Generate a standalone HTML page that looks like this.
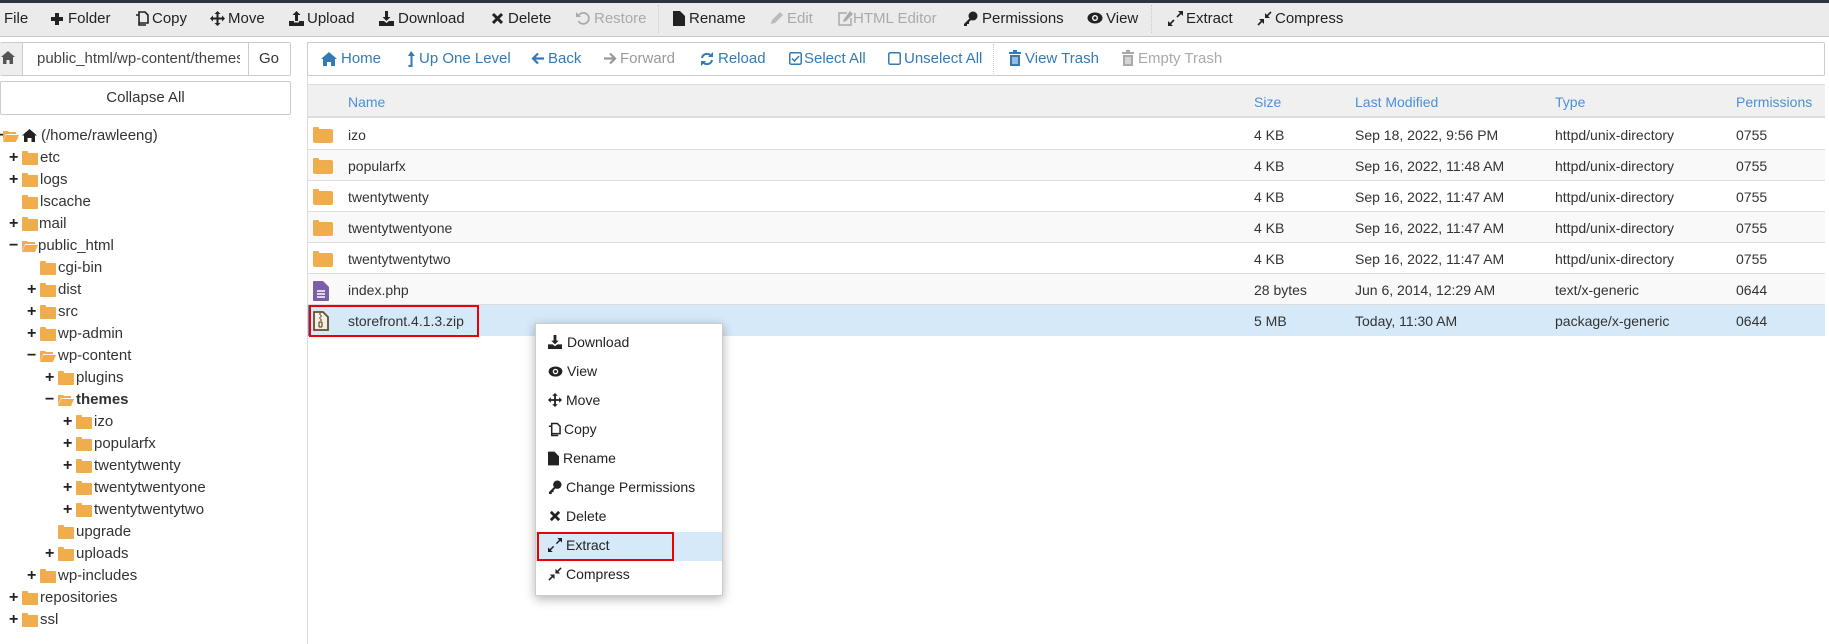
<!DOCTYPE html>
<html><head><meta charset="utf-8">
<style>
*{box-sizing:border-box;margin:0;padding:0}
body{width:1829px;height:636px;overflow:hidden;background:#fff;font-family:"Liberation Sans",Arial,sans-serif;color:#333;position:relative}
.a{position:absolute;white-space:nowrap}
.tb{position:absolute;left:0;top:0;width:1829px;height:37px;background:#ebebeb;border-top:3px solid #2b3440;border-bottom:1px solid #c8c8c8}
.t{position:absolute;top:10px;font-size:15px;line-height:18px;color:#222}
.g{color:#aaa}
.ic{position:absolute;display:inline-block}
svg{display:block}
.nav{position:absolute;left:307px;top:42px;width:1518px;height:34px;border:1px solid #ccc;border-radius:2px;background:#fff}
.n{position:absolute;top:50px;font-size:15px;line-height:18px;color:#337ab7}
.hdr{position:absolute;left:307px;top:84px;width:1518px;height:34px;background:#f0f0f0;border-top:1px solid #ddd;border-bottom:2px solid #ddd}
.h{position:absolute;top:93px;font-size:14px;line-height:18px;color:#4a90d9}
.row{position:absolute;left:308px;width:1517px;height:31px;border-bottom:1px solid #ddd}
.c{position:absolute;font-size:14px;line-height:18px;color:#333}
.tr{position:absolute;font-size:15px;line-height:18px;color:#333}
.fo{position:absolute;width:16px;height:12px;background:#f0ad4e;border-radius:1px}
.fo:before{content:"";position:absolute;left:0;top:-2px;width:6px;height:3px;background:#f0ad4e;border-radius:1px 1px 0 0}
.pl{position:absolute;font-size:16px;font-weight:bold;line-height:16px;color:#222}
.m{position:absolute;left:540px;font-size:14px;line-height:18px;color:#222}
</style></head><body>

<div class="tb"></div>
<div class="t" style="left:4px">File</div>
<svg class="ic" style="left:50px;top:12px" width="14" height="14" viewBox="0 0 14 14"><path d="M5 1h4v4h4v4h-4v4h-4v-4h-4v-4h4z" fill="#222"/></svg>
<div class="t" style="left:68px">Folder</div>
<svg class="ic" style="left:135px;top:11px" width="14" height="15" viewBox="0 0 14 15"><path d="M4 1h6l3 3v8h-9z M1 4h3v10h7" fill="none" stroke="#222" stroke-width="1.6"/></svg>
<div class="t" style="left:152px">Copy</div>
<svg class="ic" style="left:210px;top:11px" width="15" height="15" viewBox="0 0 15 15"><path d="M7.5 0l3 3h-2v3.5h3.5v-2l3 3-3 3v-2h-3.5v3.5h2l-3 3-3-3h2v-3.5h-3.5v2l-3-3 3-3v2h3.5v-3.5h-2z" fill="#222"/></svg>
<div class="t" style="left:228px">Move</div>
<svg class="ic" style="left:289px;top:11px" width="15" height="15" viewBox="0 0 15 15"><path d="M7.5 0l4 4h-2.5v6h-3v-6h-2.5z M0 10h5v1.5h5v-1.5h5v5h-15z" fill="#222"/></svg>
<div class="t" style="left:307px">Upload</div>
<svg class="ic" style="left:379px;top:11px" width="15" height="15" viewBox="0 0 15 15"><path d="M6 0h3v6h2.5l-4 4-4-4h2.5z M0 10h5l2.5 2 2.5-2h5v5h-15z" fill="#222"/></svg>
<div class="t" style="left:398px">Download</div>
<svg class="ic" style="left:491px;top:12px" width="13" height="13" viewBox="0 0 13 13"><path d="M2 2l9 9M11 2l-9 9" stroke="#222" stroke-width="3"/></svg>
<div class="t" style="left:508px">Delete</div>
<svg class="ic" style="left:576px;top:11px" width="14" height="15" viewBox="0 0 14 15"><path d="M3 4a5.5 5.5 0 1 1 -0.5 6" fill="none" stroke="#aaa" stroke-width="1.8"/><path d="M0 1v5h5z" fill="#aaa"/></svg>
<div class="t g" style="left:594px">Restore</div>
<div class="a" style="left:658px;top:5px;width:1px;height:28px;border-left:1px dotted #ccc"></div>
<svg class="ic" style="left:673px;top:11px" width="12" height="15" viewBox="0 0 12 15"><path d="M0 0h7l5 5v10h-12z" fill="#222"/></svg>
<div class="t" style="left:689px">Rename</div>
<svg class="ic" style="left:769px;top:11px" width="15" height="15" viewBox="0 0 15 15"><path d="M11 1l3 3-8 8-4 1 1-4z" fill="#bbb"/></svg>
<div class="t g" style="left:787px">Edit</div>
<svg class="ic" style="left:838px;top:11px" width="15" height="15" viewBox="0 0 15 15"><path d="M9 2h-8v12h12v-7" fill="none" stroke="#aaa" stroke-width="1.5"/><path d="M12 0l3 3-7 7-3 1 1-3z" fill="#aaa"/></svg>
<div class="t g" style="left:853px">HTML Editor</div>
<svg class="ic" style="left:963px;top:11px" width="15" height="15" viewBox="0 0 15 15"><circle cx="10" cy="5" r="4.5" fill="#222"/><path d="M7 7l-6 6v2h3v-2h2v-2l3-3z" fill="#222"/></svg>
<div class="t" style="left:982px">Permissions</div>
<svg class="ic" style="left:1087px;top:12px" width="16" height="12" viewBox="0 0 16 12"><ellipse cx="8" cy="6" rx="7.5" ry="5.5" fill="#222"/><circle cx="8" cy="6" r="3" fill="#fff"/><circle cx="8" cy="6" r="1.6" fill="#222"/></svg>
<div class="t" style="left:1106px">View</div>
<div class="a" style="left:1151px;top:5px;width:1px;height:28px;border-left:1px dotted #ccc"></div>
<svg class="ic" style="left:1168px;top:11px" width="15" height="15" viewBox="0 0 15 15"><path d="M2 13l4-4M13 2l-4 4" stroke="#222" stroke-width="1.6"/><path d="M0 15v-5l5 5zM15 0v5l-5-5z" fill="#222"/></svg>
<div class="t" style="left:1186px">Extract</div>
<svg class="ic" style="left:1257px;top:11px" width="15" height="15" viewBox="0 0 15 15"><path d="M1 14l4-4M14 1l-4 4" stroke="#222" stroke-width="1.6"/><path d="M8 2v5h5zM7 13v-5h-5z" fill="#222"/></svg>
<div class="t" style="left:1275px">Compress</div>

<!-- path bar -->
<div class="a" style="left:0;top:42px;width:291px;height:34px;border:1px solid #ccc;border-radius:2px"></div>
<div class="a" style="left:0;top:43px;width:23px;height:32px;background:#eee;border-right:1px solid #ccc"></div>
<svg class="ic" style="left:1px;top:51px" width="14" height="13" viewBox="0 0 14 13"><path d="M7 0l7 6h-2v7h-3.5v-4h-3v4h-3.5v-7h-2z" fill="#555"/></svg>
<div class="a" style="left:37px;top:50px;font-size:15px;line-height:18px;color:#444;width:203px;overflow:hidden">public_html/wp-content/themes</div>
<div class="a" style="left:248px;top:43px;width:42px;height:32px;background:#fff;border-left:1px solid #ccc"></div>
<div class="a" style="left:259px;top:50px;font-size:15px;line-height:18px;color:#333">Go</div>
<div class="a" style="left:0;top:81px;width:291px;height:34px;border:1px solid #ccc;border-radius:2px;text-align:center;font-size:15px;line-height:32px;color:#333">Collapse All</div>

<!-- tree -->
<div class="a" style="left:307px;top:42px;width:0;height:600px;border-left:1px solid #ddd"></div>
<div class="pl" style="left:-5px;top:128px">−</div>
<svg class="ic" style="left:3px;top:130px" width="16" height="12" viewBox="0 0 16 12"><path d="M0 1h5l1 1h7v2h-10l-3 7z M3 5h13l-3 7h-13z" fill="#f0ad4e"/></svg>
<svg class="ic" style="left:22px;top:129px" width="15" height="13" viewBox="0 0 15 13"><path d="M7.5 0l7.5 6.5h-2v6.5h-3.5v-4h-4v4h-3.5v-6.5h-2z" fill="#222"/></svg>
<div class="tr" style="left:41px;top:127px">(/home/rawleeng)</div>

<div class="pl" style="left:9px;top:150px">+</div><div class="fo" style="left:22px;top:153px"></div><div class="tr" style="left:40px;top:149px">etc</div>
<div class="pl" style="left:9px;top:172px">+</div><div class="fo" style="left:22px;top:175px"></div><div class="tr" style="left:40px;top:171px">logs</div>
<div class="fo" style="left:22px;top:197px"></div><div class="tr" style="left:40px;top:193px">lscache</div>
<div class="pl" style="left:9px;top:216px">+</div><div class="fo" style="left:22px;top:219px"></div><div class="tr" style="left:39px;top:215px">mail</div>
<div class="pl" style="left:9px;top:238px">−</div><svg class="ic" style="left:22px;top:241px" width="16" height="12" viewBox="0 0 16 12"><path d="M0 0h5l1 1h7v2h-10l-3 7z M3 4h13l-3 7h-13z" fill="#f0ad4e"/></svg><div class="tr" style="left:38px;top:237px">public_html</div>
<div class="fo" style="left:40px;top:263px"></div><div class="tr" style="left:58px;top:259px">cgi-bin</div>
<div class="pl" style="left:27px;top:282px">+</div><div class="fo" style="left:40px;top:285px"></div><div class="tr" style="left:58px;top:281px">dist</div>
<div class="pl" style="left:27px;top:304px">+</div><div class="fo" style="left:40px;top:307px"></div><div class="tr" style="left:58px;top:303px">src</div>
<div class="pl" style="left:27px;top:326px">+</div><div class="fo" style="left:40px;top:329px"></div><div class="tr" style="left:58px;top:325px">wp-admin</div>
<div class="pl" style="left:27px;top:348px">−</div><svg class="ic" style="left:40px;top:351px" width="16" height="12" viewBox="0 0 16 12"><path d="M0 0h5l1 1h7v2h-10l-3 7z M3 4h13l-3 7h-13z" fill="#f0ad4e"/></svg><div class="tr" style="left:58px;top:347px">wp-content</div>
<div class="pl" style="left:45px;top:370px">+</div><div class="fo" style="left:58px;top:373px"></div><div class="tr" style="left:76px;top:369px">plugins</div>
<div class="pl" style="left:45px;top:392px">−</div><svg class="ic" style="left:58px;top:395px" width="16" height="12" viewBox="0 0 16 12"><path d="M0 0h5l1 1h7v2h-10l-3 7z M3 4h13l-3 7h-13z" fill="#f0ad4e"/></svg><div class="tr" style="left:76px;top:391px;font-weight:bold">themes</div>
<div class="pl" style="left:63px;top:414px">+</div><div class="fo" style="left:76px;top:417px"></div><div class="tr" style="left:94px;top:413px">izo</div>
<div class="pl" style="left:63px;top:436px">+</div><div class="fo" style="left:76px;top:439px"></div><div class="tr" style="left:94px;top:435px">popularfx</div>
<div class="pl" style="left:63px;top:458px">+</div><div class="fo" style="left:76px;top:461px"></div><div class="tr" style="left:94px;top:457px">twentytwenty</div>
<div class="pl" style="left:63px;top:480px">+</div><div class="fo" style="left:76px;top:483px"></div><div class="tr" style="left:94px;top:479px">twentytwentyone</div>
<div class="pl" style="left:63px;top:502px">+</div><div class="fo" style="left:76px;top:505px"></div><div class="tr" style="left:94px;top:501px">twentytwentytwo</div>
<div class="fo" style="left:58px;top:527px"></div><div class="tr" style="left:76px;top:523px">upgrade</div>
<div class="pl" style="left:45px;top:546px">+</div><div class="fo" style="left:58px;top:549px"></div><div class="tr" style="left:76px;top:545px">uploads</div>
<div class="pl" style="left:27px;top:568px">+</div><div class="fo" style="left:40px;top:571px"></div><div class="tr" style="left:58px;top:567px">wp-includes</div>
<div class="pl" style="left:9px;top:590px">+</div><div class="fo" style="left:22px;top:593px"></div><div class="tr" style="left:40px;top:589px">repositories</div>
<div class="pl" style="left:9px;top:612px">+</div><div class="fo" style="left:22px;top:615px"></div><div class="tr" style="left:40px;top:611px">ssl</div>

<!-- nav -->
<div class="nav"></div>
<svg class="ic" style="left:321px;top:52px" width="16" height="14" viewBox="0 0 16 14"><path d="M8 0l8 7h-2v7h-4v-4h-4v4h-4v-7h-2z" fill="#337ab7"/></svg>
<div class="n" style="left:341px">Home</div>
<svg class="ic" style="left:406px;top:51px" width="10" height="16" viewBox="0 0 10 16"><path d="M5 0l4 5h-2.5v11h-4v-2h2v-9h-2.5z" fill="#337ab7"/></svg>
<div class="n" style="left:419px">Up One Level</div>
<svg class="ic" style="left:531px;top:52px" width="14" height="13" viewBox="0 0 14 13"><path d="M13 6.5h-10M7 1.5l-5 5 5 5" fill="none" stroke="#337ab7" stroke-width="2.2"/></svg>
<div class="n" style="left:548px">Back</div>
<svg class="ic" style="left:603px;top:52px" width="14" height="13" viewBox="0 0 14 13"><path d="M1 6.5h10M7 1.5l5 5-5 5" fill="none" stroke="#999" stroke-width="2.2"/></svg>
<div class="n" style="left:620px;color:#999">Forward</div>
<svg class="ic" style="left:700px;top:52px" width="14" height="14" viewBox="0 0 14 14"><path d="M2 6a5 5 0 0 1 9-2M12 8a5 5 0 0 1-9 2" fill="none" stroke="#337ab7" stroke-width="2"/><path d="M13 0v5h-5zM1 14v-5h5z" fill="#337ab7"/></svg>
<div class="n" style="left:718px">Reload</div>
<svg class="ic" style="left:789px;top:52px" width="13" height="13" viewBox="0 0 13 13"><rect x="0.75" y="0.75" width="11.5" height="11.5" rx="1.5" fill="none" stroke="#337ab7" stroke-width="1.5"/><path d="M3 6.5l2.5 2.5 4.5-5" fill="none" stroke="#337ab7" stroke-width="1.5"/></svg>
<div class="n" style="left:804px">Select All</div>
<svg class="ic" style="left:888px;top:52px" width="13" height="13" viewBox="0 0 13 13"><rect x="0.75" y="0.75" width="11.5" height="11.5" rx="1.5" fill="none" stroke="#337ab7" stroke-width="1.5"/></svg>
<div class="n" style="left:904px">Unselect All</div>
<div class="a" style="left:993px;top:44px;height:30px;border-left:1px dotted #ccc"></div>
<svg class="ic" style="left:1009px;top:50px" width="12" height="16" viewBox="0 0 12 16"><path d="M0 2h12v2h-12zM4 0h4v2h-4zM1 5h10v11h-10z" fill="#337ab7"/><path d="M4 7v7M6 7v7M8 7v7" stroke="#fff" stroke-width="1"/></svg>
<div class="n" style="left:1025px">View Trash</div>
<svg class="ic" style="left:1122px;top:50px" width="12" height="16" viewBox="0 0 12 16"><path d="M0 2h12v2h-12zM4 0h4v2h-4zM1 5h10v11h-10z" fill="#aaa"/><path d="M4 7v7M6 7v7M8 7v7" stroke="#fff" stroke-width="1"/></svg>
<div class="n" style="left:1138px;color:#aaa">Empty Trash</div>

<!-- table -->
<div class="hdr"></div>
<div class="h" style="left:348px">Name</div>
<div class="h" style="left:1254px">Size</div>
<div class="h" style="left:1355px">Last Modified</div>
<div class="h" style="left:1555px">Type</div>
<div class="h" style="left:1736px">Permissions</div>
<div class="a" style="left:307px;top:84px;height:560px;border-left:1px solid #ddd"></div>

<div class="row" style="top:119px;background:#fff"></div>
<div class="row" style="top:150px;background:#f9f9f9"></div>
<div class="row" style="top:181px;background:#fff"></div>
<div class="row" style="top:212px;background:#f9f9f9"></div>
<div class="row" style="top:243px;background:#fff"></div>
<div class="row" style="top:274px;background:#f9f9f9"></div>
<div class="row" style="top:305px;background:#d6e9f8;border-left:2px solid #4a90d9;height:31px;border-bottom:none"></div>

<div class="fo" style="left:313px;top:129px;width:20px;height:14px;border-radius:2px"></div>
<div class="fo" style="left:313px;top:160px;width:20px;height:14px;border-radius:2px"></div>
<div class="fo" style="left:313px;top:191px;width:20px;height:14px;border-radius:2px"></div>
<div class="fo" style="left:313px;top:222px;width:20px;height:14px;border-radius:2px"></div>
<div class="fo" style="left:313px;top:253px;width:20px;height:14px;border-radius:2px"></div>
<svg class="ic" style="left:313px;top:281px" width="16" height="20" viewBox="0 0 16 20"><path d="M0 1a1 1 0 0 1 1-1h9l6 6v13a1 1 0 0 1-1 1h-14a1 1 0 0 1-1-1z" fill="#7b5ea7"/><path d="M4 10h8M4 13h8M4 16h8" stroke="#fff" stroke-width="1.4"/></svg>
<svg class="ic" style="left:313px;top:311px" width="16" height="20" viewBox="0 0 16 20"><path d="M1 1h9l5 5v13h-14z" fill="#f4efe6" stroke="#6b4a2e" stroke-width="1.8"/><path d="M7 2v2M8 4v2M7 6v2M8 8v2" stroke="#6b4a2e" stroke-width="1.2"/><rect x="6" y="11" width="3" height="5" rx="1" fill="none" stroke="#6b4a2e" stroke-width="1.2"/></svg>

<div class="c" style="left:348px;top:126px">izo</div>
<div class="c" style="left:348px;top:157px">popularfx</div>
<div class="c" style="left:348px;top:188px">twentytwenty</div>
<div class="c" style="left:348px;top:219px">twentytwentyone</div>
<div class="c" style="left:348px;top:250px">twentytwentytwo</div>
<div class="c" style="left:348px;top:281px">index.php</div>
<div class="c" style="left:348px;top:312px">storefront.4.1.3.zip</div>
<div class="a" style="left:309px;top:305px;width:170px;height:32px;border:2px solid #e00"></div>

<div class="c" style="left:1254px;top:126px">4 KB</div>
<div class="c" style="left:1254px;top:157px">4 KB</div>
<div class="c" style="left:1254px;top:188px">4 KB</div>
<div class="c" style="left:1254px;top:219px">4 KB</div>
<div class="c" style="left:1254px;top:250px">4 KB</div>
<div class="c" style="left:1254px;top:281px">28 bytes</div>
<div class="c" style="left:1254px;top:312px">5 MB</div>

<div class="c" style="left:1355px;top:126px">Sep 18, 2022, 9:56 PM</div>
<div class="c" style="left:1355px;top:157px">Sep 16, 2022, 11:48 AM</div>
<div class="c" style="left:1355px;top:188px">Sep 16, 2022, 11:47 AM</div>
<div class="c" style="left:1355px;top:219px">Sep 16, 2022, 11:47 AM</div>
<div class="c" style="left:1355px;top:250px">Sep 16, 2022, 11:47 AM</div>
<div class="c" style="left:1355px;top:281px">Jun 6, 2014, 12:29 AM</div>
<div class="c" style="left:1355px;top:312px">Today, 11:30 AM</div>

<div class="c" style="left:1555px;top:126px">httpd/unix-directory</div>
<div class="c" style="left:1555px;top:157px">httpd/unix-directory</div>
<div class="c" style="left:1555px;top:188px">httpd/unix-directory</div>
<div class="c" style="left:1555px;top:219px">httpd/unix-directory</div>
<div class="c" style="left:1555px;top:250px">httpd/unix-directory</div>
<div class="c" style="left:1555px;top:281px">text/x-generic</div>
<div class="c" style="left:1555px;top:312px">package/x-generic</div>

<div class="c" style="left:1736px;top:126px">0755</div>
<div class="c" style="left:1736px;top:157px">0755</div>
<div class="c" style="left:1736px;top:188px">0755</div>
<div class="c" style="left:1736px;top:219px">0755</div>
<div class="c" style="left:1736px;top:250px">0755</div>
<div class="c" style="left:1736px;top:281px">0644</div>
<div class="c" style="left:1736px;top:312px">0644</div>

<!-- context menu -->
<div class="a" style="left:535px;top:323px;width:188px;height:273px;background:#fff;border:1px solid #ccc;box-shadow:0 3px 10px rgba(0,0,0,0.3)"></div>
<div class="a" style="left:536px;top:532px;width:186px;height:29px;background:#d6e9f8"></div>
<div class="a" style="left:537px;top:532px;width:137px;height:29px;border:2px solid #e00"></div>
<svg class="ic" style="left:548px;top:335px" width="14" height="14" viewBox="0 0 15 15"><path d="M6 0h3v6h2.5l-4 4-4-4h2.5z M0 10h5l2.5 2 2.5-2h5v5h-15z" fill="#222"/></svg>
<div class="m" style="left:567px;top:333px">Download</div>
<svg class="ic" style="left:548px;top:366px" width="15" height="11" viewBox="0 0 16 12"><ellipse cx="8" cy="6" rx="7.5" ry="5.5" fill="#222"/><circle cx="8" cy="6" r="3" fill="#fff"/><circle cx="8" cy="6" r="1.6" fill="#222"/></svg>
<div class="m" style="left:567px;top:362px">View</div>
<svg class="ic" style="left:548px;top:393px" width="14" height="14" viewBox="0 0 15 15"><path d="M7.5 0l3 3h-2v3.5h3.5v-2l3 3-3 3v-2h-3.5v3.5h2l-3 3-3-3h2v-3.5h-3.5v2l-3-3 3-3v2h3.5v-3.5h-2z" fill="#222"/></svg>
<div class="m" style="left:566px;top:391px">Move</div>
<svg class="ic" style="left:548px;top:422px" width="13" height="15" viewBox="0 0 14 15"><path d="M4 1h6l3 3v8h-9z M1 4h3v10h7" fill="none" stroke="#222" stroke-width="1.6"/></svg>
<div class="m" style="left:564px;top:420px">Copy</div>
<svg class="ic" style="left:548px;top:451px" width="11" height="15" viewBox="0 0 12 15"><path d="M0 0h7l5 5v10h-12z" fill="#222"/></svg>
<div class="m" style="left:563px;top:449px">Rename</div>
<svg class="ic" style="left:548px;top:480px" width="14" height="14" viewBox="0 0 15 15"><circle cx="10" cy="5" r="4.5" fill="#222"/><path d="M7 7l-6 6v2h3v-2h2v-2l3-3z" fill="#222"/></svg>
<div class="m" style="left:566px;top:478px">Change Permissions</div>
<svg class="ic" style="left:549px;top:510px" width="12" height="12" viewBox="0 0 13 13"><path d="M2 2l9 9M11 2l-9 9" stroke="#222" stroke-width="3"/></svg>
<div class="m" style="left:566px;top:507px">Delete</div>
<svg class="ic" style="left:548px;top:538px" width="14" height="14" viewBox="0 0 15 15"><path d="M2 13l4-4M13 2l-4 4" stroke="#222" stroke-width="1.6"/><path d="M0 15v-5l5 5zM15 0v5l-5-5z" fill="#222"/></svg>
<div class="m" style="left:566px;top:536px">Extract</div>
<svg class="ic" style="left:548px;top:567px" width="14" height="14" viewBox="0 0 15 15"><path d="M1 14l4-4M14 1l-4 4" stroke="#222" stroke-width="1.6"/><path d="M8 2v5h5zM7 13v-5h-5z" fill="#222"/></svg>
<div class="m" style="left:566px;top:565px">Compress</div>

</body></html>
